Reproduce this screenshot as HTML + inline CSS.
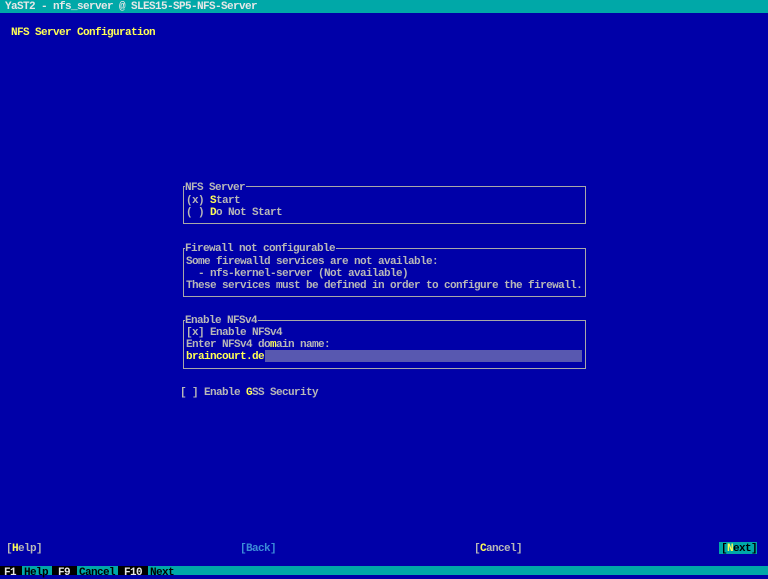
<!DOCTYPE html>
<html><head><meta charset="utf-8"><style>
html,body{margin:0;padding:0}
body{width:768px;height:575px;background:#0000a8;position:relative;overflow:hidden;font-family:"Liberation Mono","DejaVu Sans Mono",monospace;font-size:11px;letter-spacing:-0.6px;font-weight:bold;color:#b8b8b8}
.t{position:absolute;white-space:pre;line-height:12px;height:12px}
.y{color:#ffff54}
.fr{position:absolute;border:1px solid #a8a8a8;box-sizing:border-box}
.lab{position:absolute;background:#0000a8;white-space:pre;line-height:12px;padding-right:1px}
</style></head><body>
<div style="position:absolute;left:0;top:0;width:768px;height:13px;background:#00a8a8"></div>
<div class="t" style="left:5px;top:1px;color:#e8e8e8">YaST2 - nfs_server @ SLES15-SP5-NFS-Server</div>
<div class="t y" style="left:11px;top:27px">NFS Server Configuration</div>

<div class="fr" style="left:183px;top:186px;width:403px;height:38px"></div>
<div class="lab" style="left:185px;top:182px">NFS Server</div>
<div class="t" style="left:186px;top:195px">(x) <span class="y">S</span>tart</div>
<div class="t" style="left:186px;top:207px">( ) <span class="y">D</span>o Not Start</div>

<div class="fr" style="left:183px;top:248px;width:403px;height:49px"></div>
<div class="lab" style="left:185px;top:243px">Firewall not configurable</div>
<div class="t" style="left:186px;top:256px">Some firewalld services are not available:</div>
<div class="t" style="left:186px;top:268px">  - nfs-kernel-server (Not available)</div>
<div class="t" style="left:186px;top:280px">These services must be defined in order to configure the firewall.</div>

<div class="fr" style="left:183px;top:320px;width:403px;height:49px"></div>
<div class="lab" style="left:185px;top:315px">Enable NFSv4</div>
<div class="t" style="left:186px;top:327px">[x] Enable NFSv4</div>
<div class="t" style="left:186px;top:339px">Enter NFSv4 do<span class="y">m</span>ain name:</div>
<div style="position:absolute;left:265px;top:350px;width:317px;height:12px;background:#5858b0"></div>
<div class="t y" style="left:186px;top:351px">braincourt.de</div>

<div class="t" style="left:180px;top:387px">[ ] Enable <span class="y">G</span>SS Security</div>

<div class="t" style="left:6px;top:543px">[<span class="y">H</span>elp]</div>
<div class="t" style="left:240px;top:543px;color:#3c8cd8">[Back]</div>
<div class="t" style="left:474px;top:543px">[<span class="y">C</span>ancel]</div>
<div style="position:absolute;left:719px;top:542px;width:38px;height:12px;background:#00a8a8"></div>
<div class="t" style="left:721px;top:543px;color:#000">[<span class="y">N</span>ext]</div>

<div style="position:absolute;left:0;top:566px;width:768px;height:9px;background:#00a8a8"></div>
<div style="position:absolute;left:0;top:566px;width:22px;height:9px;background:#000"></div>
<div style="position:absolute;left:52px;top:566px;width:25px;height:9px;background:#000"></div>
<div style="position:absolute;left:118px;top:566px;width:30px;height:9px;background:#000"></div>
<div class="t" style="left:4px;top:567px;color:#e8e8e8">F1</div>
<div class="t" style="left:24px;top:567px;color:#000">Help</div>
<div class="t" style="left:58px;top:567px;color:#e8e8e8">F9</div>
<div class="t" style="left:79px;top:567px;color:#000">Cancel</div>
<div class="t" style="left:124px;top:567px;color:#e8e8e8">F10</div>
<div class="t" style="left:150px;top:567px;color:#000">Next</div>
</body></html>
